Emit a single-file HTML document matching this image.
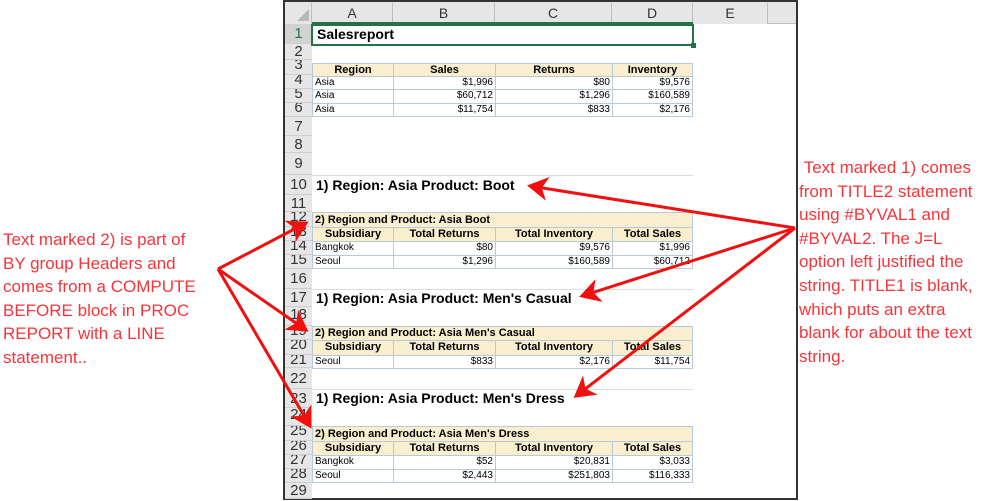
<!DOCTYPE html>
<html><head><meta charset="utf-8"><style>
*{margin:0;padding:0;box-sizing:border-box}
body{width:999px;height:501px;background:#fff;position:relative;overflow:hidden;font-family:"Liberation Sans",Arial,sans-serif}
.a{position:absolute}
.rh{position:absolute;left:285px;width:27px;background:#e6e6e6;border-bottom:1px solid #cfcfcf;color:#333;font-size:15px;text-align:center;overflow:hidden}
.ch{position:absolute;top:3px;height:21px;background:#e6e6e6;border-right:1px solid #bdbdbd;color:#333;font-size:14px;text-align:center;line-height:21px}
.c{position:absolute;border:1px solid #b7c9dd;font-size:10px;color:#000;padding:0 2px;line-height:12px;white-space:nowrap;overflow:hidden}
.h{background:#f9efcf;font-weight:bold;text-align:center;font-size:11px}
.r{text-align:right}
.t{position:absolute;left:316px;font-weight:bold;font-size:14px;white-space:nowrap}
.ln{position:absolute;left:312px;width:381px;height:1px;background:#dcdcdc}
.red{position:absolute;color:#f5353a;font-size:17px;line-height:23.6px;white-space:nowrap}
</style></head><body>
<div class="a" style="left:283px;top:0;width:515px;height:500px;border:2px solid #333"></div>
<div class="a" style="left:285px;top:2px;width:511px;height:22px;background:#e6e6e6;border-bottom:1px solid #bdbdbd"></div>
<div class="a" style="left:285px;top:3px;width:27px;height:21px;background:#e6e6e6;border-right:1px solid #bdbdbd"></div>
<svg class="a" style="left:297px;top:9px" width="13" height="13"><polygon points="12,0 12,12 0,12" fill="#b8b8b8"/></svg>
<div class="ch" style="left:312px;width:81px">A</div>
<div class="ch" style="left:393px;width:102px">B</div>
<div class="ch" style="left:495px;width:117px">C</div>
<div class="ch" style="left:612px;width:81px">D</div>
<div class="ch" style="left:693px;width:75px">E</div>
<div class="a" style="left:312px;top:22px;width:381px;height:2px;background:#217346"></div>
<div class="a" style="left:285px;top:24px;width:27px;height:475px;background:#e6e6e6;border-right:1px solid #bdbdbd"></div>
<div class="rh" style="top:24px;height:20px;line-height:20px;color:#217346;background:#d2d2d2">1</div>
<div class="rh" style="top:44px;height:16px;line-height:16px">2</div>
<div class="rh" style="top:60px;height:15px;line-height:10px">3</div>
<div class="rh" style="top:75px;height:14px;line-height:10px">4</div>
<div class="rh" style="top:89px;height:14px;line-height:10px">5</div>
<div class="rh" style="top:103px;height:14px;line-height:10px">6</div>
<div class="rh" style="top:117px;height:19px;line-height:19px">7</div>
<div class="rh" style="top:136px;height:17px;line-height:17px">8</div>
<div class="rh" style="top:153px;height:22px;line-height:22px">9</div>
<div class="rh" style="top:175px;height:20px;line-height:20px">10</div>
<div class="rh" style="top:195px;height:17px;line-height:17px">11</div>
<div class="rh" style="top:212px;height:15px;line-height:10px">12</div>
<div class="rh" style="top:227px;height:14px;line-height:10px">13</div>
<div class="rh" style="top:241px;height:14px;line-height:10px">14</div>
<div class="rh" style="top:255px;height:14px;line-height:10px">15</div>
<div class="rh" style="top:269px;height:20px;line-height:20px">16</div>
<div class="rh" style="top:289px;height:18px;line-height:18px">17</div>
<div class="rh" style="top:307px;height:19px;line-height:16px">18</div>
<div class="rh" style="top:326px;height:14px;line-height:10px">19</div>
<div class="rh" style="top:340px;height:15px;line-height:10px">20</div>
<div class="rh" style="top:355px;height:13px;line-height:10px">21</div>
<div class="rh" style="top:368px;height:21px;line-height:21px">22</div>
<div class="rh" style="top:389px;height:19px;line-height:19px">23</div>
<div class="rh" style="top:408px;height:18px;line-height:14px">24</div>
<div class="rh" style="top:426px;height:15px;line-height:10px">25</div>
<div class="rh" style="top:441px;height:14px;line-height:10px">26</div>
<div class="rh" style="top:455px;height:14px;line-height:10px">27</div>
<div class="rh" style="top:469px;height:14px;line-height:10px">28</div>
<div class="rh" style="top:483px;height:16px;line-height:16px">29</div>
<div class="a" style="left:311px;top:24px;width:383px;height:22px;border:2px solid #217346"></div>
<div class="a" style="left:691px;top:43px;width:5px;height:5px;background:#217346"></div>
<div class="a" style="left:317px;top:26px;font-weight:bold;font-size:14px">Salesreport</div>
<div class="c h" style="left:312px;top:63px;width:82px;height:14px">Region</div>
<div class="c h" style="left:393px;top:63px;width:103px;height:14px">Sales</div>
<div class="c h" style="left:495px;top:63px;width:118px;height:14px">Returns</div>
<div class="c h" style="left:612px;top:63px;width:81px;height:14px">Inventory</div>
<div class="c" style="left:312px;top:76px;width:82px;height:14px">Asia</div>
<div class="c r" style="left:393px;top:76px;width:103px;height:14px">$1,996</div>
<div class="c r" style="left:495px;top:76px;width:118px;height:14px">$80</div>
<div class="c r" style="left:612px;top:76px;width:81px;height:14px">$9,576</div>
<div class="c" style="left:312px;top:89px;width:82px;height:15px">Asia</div>
<div class="c r" style="left:393px;top:89px;width:103px;height:15px">$60,712</div>
<div class="c r" style="left:495px;top:89px;width:118px;height:15px">$1,296</div>
<div class="c r" style="left:612px;top:89px;width:81px;height:15px">$160,589</div>
<div class="c" style="left:312px;top:103px;width:82px;height:14px">Asia</div>
<div class="c r" style="left:393px;top:103px;width:103px;height:14px">$11,754</div>
<div class="c r" style="left:495px;top:103px;width:118px;height:14px">$833</div>
<div class="c r" style="left:612px;top:103px;width:81px;height:14px">$2,176</div>
<div class="ln" style="top:175px"></div>
<div class="t" style="top:177px">1) Region: Asia Product: Boot</div>
<div class="c h" style="left:312px;top:212px;width:381px;height:16px;text-align:left;line-height:14px">2) Region and Product: Asia Boot</div>
<div class="c h" style="left:312px;top:227px;width:82px;height:15px">Subsidiary</div>
<div class="c h" style="left:393px;top:227px;width:103px;height:15px">Total Returns</div>
<div class="c h" style="left:495px;top:227px;width:118px;height:15px">Total Inventory</div>
<div class="c h" style="left:612px;top:227px;width:81px;height:15px">Total Sales</div>
<div class="c" style="left:312px;top:241px;width:82px;height:15px">Bangkok</div>
<div class="c r" style="left:393px;top:241px;width:103px;height:15px">$80</div>
<div class="c r" style="left:495px;top:241px;width:118px;height:15px">$9,576</div>
<div class="c r" style="left:612px;top:241px;width:81px;height:15px">$1,996</div>
<div class="c" style="left:312px;top:255px;width:82px;height:14px">Seoul</div>
<div class="c r" style="left:393px;top:255px;width:103px;height:14px">$1,296</div>
<div class="c r" style="left:495px;top:255px;width:118px;height:14px">$160,589</div>
<div class="c r" style="left:612px;top:255px;width:81px;height:14px">$60,712</div>
<div class="ln" style="top:289px"></div>
<div class="t" style="top:290px">1) Region: Asia Product: Men's Casual</div>
<div class="c h" style="left:312px;top:326px;width:381px;height:15px;text-align:left;line-height:13px">2) Region and Product: Asia Men's Casual</div>
<div class="c h" style="left:312px;top:340px;width:82px;height:16px">Subsidiary</div>
<div class="c h" style="left:393px;top:340px;width:103px;height:16px">Total Returns</div>
<div class="c h" style="left:495px;top:340px;width:118px;height:16px">Total Inventory</div>
<div class="c h" style="left:612px;top:340px;width:81px;height:16px">Total Sales</div>
<div class="c" style="left:312px;top:355px;width:82px;height:14px">Seoul</div>
<div class="c r" style="left:393px;top:355px;width:103px;height:14px">$833</div>
<div class="c r" style="left:495px;top:355px;width:118px;height:14px">$2,176</div>
<div class="c r" style="left:612px;top:355px;width:81px;height:14px">$11,754</div>
<div class="ln" style="top:389px"></div>
<div class="t" style="top:390px">1) Region: Asia Product: Men's Dress</div>
<div class="c h" style="left:312px;top:426px;width:381px;height:16px;text-align:left;line-height:14px">2) Region and Product: Asia Men's Dress</div>
<div class="c h" style="left:312px;top:441px;width:82px;height:15px">Subsidiary</div>
<div class="c h" style="left:393px;top:441px;width:103px;height:15px">Total Returns</div>
<div class="c h" style="left:495px;top:441px;width:118px;height:15px">Total Inventory</div>
<div class="c h" style="left:612px;top:441px;width:81px;height:15px">Total Sales</div>
<div class="c" style="left:312px;top:455px;width:82px;height:15px">Bangkok</div>
<div class="c r" style="left:393px;top:455px;width:103px;height:15px">$52</div>
<div class="c r" style="left:495px;top:455px;width:118px;height:15px">$20,831</div>
<div class="c r" style="left:612px;top:455px;width:81px;height:15px">$3,033</div>
<div class="c" style="left:312px;top:469px;width:82px;height:14px">Seoul</div>
<div class="c r" style="left:393px;top:469px;width:103px;height:14px">$2,443</div>
<div class="c r" style="left:495px;top:469px;width:118px;height:14px">$251,803</div>
<div class="c r" style="left:612px;top:469px;width:81px;height:14px">$116,333</div>
<div class="red" style="left:3px;top:228px">Text marked 2) is part of<br>BY group Headers and<br>comes from a COMPUTE<br>BEFORE block in PROC<br>REPORT with a LINE<br>statement..</div>
<div class="red" style="left:799px;top:156px">&nbsp;Text marked 1) comes<br>from TITLE2 statement<br>using #BYVAL1 and<br>#BYVAL2. The J=L<br>option left justified the<br>string. TITLE1 is blank,<br>which puts an extra<br>blank for about the text<br>string.</div>
<svg class="a" style="left:0;top:0" width="999" height="501">
<defs><marker id="m" markerWidth="8" markerHeight="8" refX="6" refY="4" orient="auto" markerUnits="strokeWidth"><path d="M0,0 L7,4 L0,8 L2,4 Z" fill="#f01010"/></marker></defs>
<g stroke="#f01010" stroke-width="3" fill="none" marker-end="url(#m)">
<line x1="218" y1="269" x2="306" y2="223"/>
<line x1="218" y1="269" x2="306" y2="330"/>
<line x1="218" y1="269" x2="310" y2="426"/>
<line x1="795" y1="228" x2="530" y2="186"/>
<line x1="795" y1="228" x2="582" y2="296"/>
<line x1="795" y1="228" x2="576" y2="396"/>
</g></svg>
</body></html>
